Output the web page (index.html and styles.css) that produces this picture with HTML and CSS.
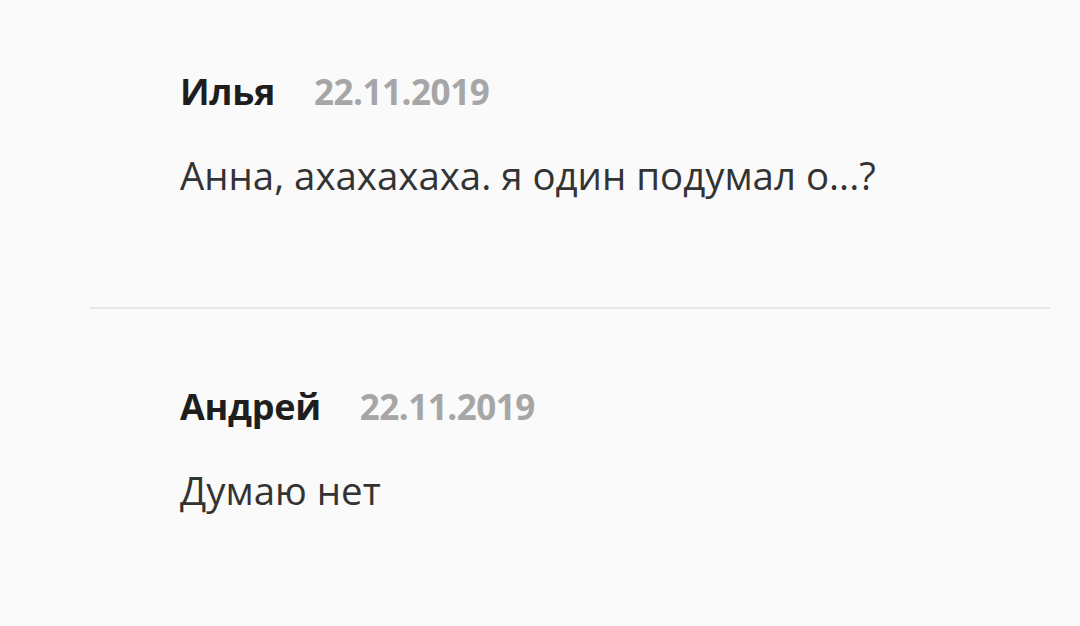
FILE: index.html
```html
<!DOCTYPE html>
<html lang="ru">
<head>
  <meta charset="UTF-8">
  <title>Комментарии</title>
  <link rel="stylesheet" href="styles.css">
</head>
<body>
  <div class="comments">
    <div class="comment">
      <div class="comment-head">
        <span class="author">Илья</span>
        <span class="date">22.11.2019</span>
      </div>
      <p class="comment-text">Анна, ахахахаха. я один подумал о...?</p>
    </div>
    <div class="comment">
      <div class="comment-head">
        <span class="author">Андрей</span>
        <span class="date">22.11.2019</span>
      </div>
      <p class="comment-text">Думаю нет</p>
    </div>
  </div>
</body>
</html>
```

FILE: styles.css
```css
body {
  margin: 0;
  background-color: #fafafa;
  font-family: "Open Sans", "Noto Sans", sans-serif;
  color: #333333;
}
.comments {
  margin: 0 30px 0 90px;
}
.comment {
  padding: 64px 0 104px 90px;
}
.comment + .comment {
  border-top: 2px solid #e8e8e8;
  padding-top: 70px;
}
.comment-head {
  display: flex;
  align-items: baseline;
  gap: 39px;
  font-size: 36px;
  line-height: 56px;
  font-weight: 700;
}
.author {
  color: #1e1e1e;
  letter-spacing: -0.3px;
}
.date {
  color: #a6a6a6;
  font-size: 35px;
  letter-spacing: -0.5px;
}
.comment-text {
  margin: 27px 0 0;
  font-size: 38.4px;
  line-height: 56px;
}
```
